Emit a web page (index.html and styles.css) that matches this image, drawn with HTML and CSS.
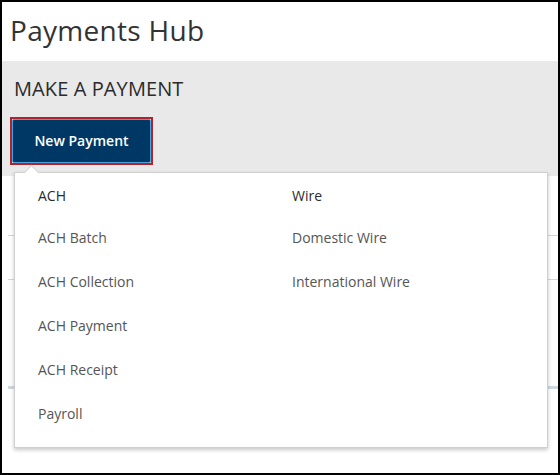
FILE: index.html
```html
<!DOCTYPE html>
<html>
<head>
<meta charset="utf-8">
<link rel="stylesheet" href="styles.css">
</head>
<body>
<div class="frame">
  <header class="hub-header">
    <h1 class="hub-title">Payments Hub</h1>
  </header>
  <section class="make-payment">
    <h2 class="section-title">MAKE A PAYMENT</h2>
    <div class="btn-focus">
      <button class="btn-primary">New Payment</button>
    </div>
  </section>
  <section class="content">
    <div class="row row-first"></div>
    <div class="row row-second"></div>
    <div class="row row-rest"></div>
    <div class="bar"></div>
  </section>

  <div class="dropdown">
    <span class="caret"></span>
    <div class="menu-col col-ach">
      <div class="menu-head">ACH</div>
      <div class="menu-item">ACH Batch</div>
      <div class="menu-item">ACH Collection</div>
      <div class="menu-item">ACH Payment</div>
      <div class="menu-item">ACH Receipt</div>
      <div class="menu-item">Payroll</div>
    </div>
    <div class="menu-col col-wire">
      <div class="menu-head">Wire</div>
      <div class="menu-item">Domestic Wire</div>
      <div class="menu-item">International Wire</div>
    </div>
  </div>
</div>
</body>
</html>
```

FILE: styles.css
```css
* { box-sizing: border-box; }
html, body { margin: 0; padding: 0; background: #000; }
body { font-family: "Open Sans", "Liberation Sans", sans-serif; color: #333; }

.frame {
  position: relative;
  width: 560px;
  height: 475px;
  border: 2px solid #000;
  background: #fff;
  overflow: hidden;
  display: flex;
  flex-direction: column;
}

.hub-header {
  height: 59px;
  padding: 9px 8px 0;
  background: #fff;
  flex: none;
}
.hub-title {
  margin: 0;
  font-size: 28px;
  line-height: 38px;
  font-weight: 400;
  letter-spacing: 0.3px;
  color: #333;
}

.make-payment {
  flex: none;
  background: #e9e9e9;
  padding: 14px 8px 11px;
}
.section-title {
  margin: 0 0 14px 4px;
  font-size: 20px;
  line-height: 28px;
  font-weight: 500;
  letter-spacing: 0.1px;
  color: #2b2b2b;
}
.btn-focus {
  display: inline-block;
  border: 2px solid #b3222b;
}
.btn-primary {
  display: block;
  width: 139px;
  height: 44px;
  margin: 0;
  padding: 0 0 1px;
  border: 1px solid #4aa3e0;
  border-radius: 2px;
  background: #003865;
  color: #fff;
  font-family: "Open Sans", "Liberation Sans", sans-serif;
  font-size: 14px;
  font-weight: 600;
}

.content {
  flex: 1;
  padding-left: 6px;
  display: flex;
  flex-direction: column;
}
.row { border-bottom: 1px solid #d6d6d6; }
.row-first { height: 60px; }
.row-second { height: 44px; }
.row-rest { height: 106px; border-bottom: none; background: #fdfdfd; }
.bar { height: 3px; background: #cdd8e1; }

.dropdown {
  position: absolute;
  left: 12px;
  top: 170px;
  width: 534px;
  height: 276px;
  background: #fff;
  border: 1px solid #d0d0d0;
  box-shadow: 0 2px 4px rgba(0, 0, 0, 0.22);
  padding: 13px 0 0 23px;
  display: grid;
  grid-template-columns: 254px 1fr;
  align-items: start;
}
.caret {
  position: absolute;
  left: 11px;
  top: -6px;
  width: 11px;
  height: 11px;
  background: #fff;
  border-top: 1px solid #cfcfcf;
  border-left: 1px solid #cfcfcf;
  transform: rotate(45deg);
}
.menu-head {
  font-size: 14px;
  font-weight: 500;
  line-height: 20px;
  height: 20px;
  margin-bottom: 10px;
  color: #2b2b2b;
}
.menu-item {
  font-size: 14px;
  line-height: 44px;
  height: 44px;
  color: #555;
}
```
